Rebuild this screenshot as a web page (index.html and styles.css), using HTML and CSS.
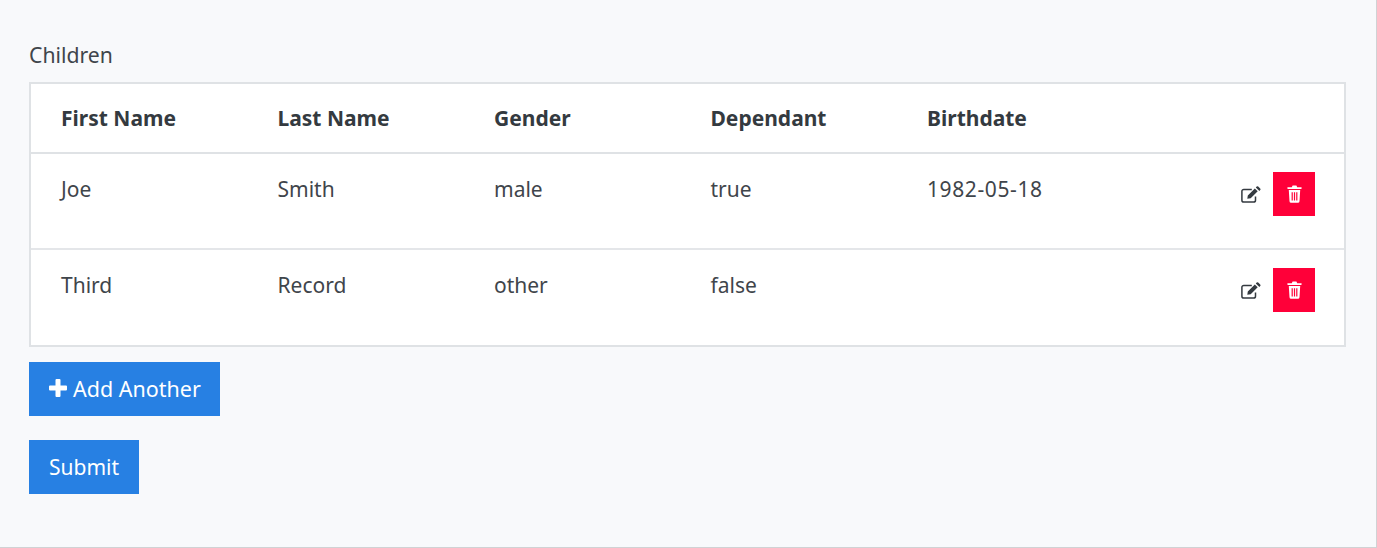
FILE: index.html
```html
<!DOCTYPE html>
<html lang="en">
<head>
  <meta charset="UTF-8">
  <meta name="viewport" content="width=device-width, initial-scale=1.0">
  <title>Children</title>
  <link rel="stylesheet" href="styles.css">
</head>
<body>

  <section class="page">
    <label class="field-label">Children</label>

    <table class="children">
      <thead>
        <tr>
          <th>First Name</th>
          <th>Last Name</th>
          <th>Gender</th>
          <th>Dependant</th>
          <th>Birthdate</th>
          <th></th>
        </tr>
      </thead>
      <tbody>
        <tr>
          <td>Joe</td>
          <td>Smith</td>
          <td>male</td>
          <td>true</td>
          <td class="date">1982-05-18</td>
          <td class="actions">
            <button class="edit" aria-label="Edit">
              <svg viewBox="0 0 20 17" width="20" height="17"><path d="M14.500 10.500v3.700a1.900 1.900 0 0 1-1.900 1.900H2.800a1.900 1.900 0 0 1-1.900-1.900V5.300a1.900 1.900 0 0 1 1.900-1.900h8" fill="none" stroke="#343a40" stroke-width="1.500"/><path d="M6.800 9.400 13.800 2.400l2.900 2.900-7 7-3.400.5zM14.800 1.400l.9-.8a1.100 1.100 0 0 1 1.500 0l2 2a1.100 1.100 0 0 1 0 1.500l-.8.9z" fill="#343a40"/></svg>
            </button>
            <button class="delete" aria-label="Delete">
              <svg viewBox="0 0 15 18" width="15" height="18"><path d="M1 2.300h3.800L5.600.6h3.800l.8 1.700H14a.8.800 0 0 1 0 1.600H1a.8.800 0 0 1 0-1.600zM1.800 5.100h11.400l-.7 11.200a1.600 1.600 0 0 1-1.600 1.500H4.100a1.600 1.600 0 0 1-1.600-1.500zM4.600 7.200v8.400h1.200V7.200zm2.300 0v8.400h1.200V7.200zm2.300 0v8.400h1.200V7.200z" fill="#fff" fill-rule="evenodd"/></svg>
            </button>
          </td>
        </tr>
        <tr>
          <td>Third</td>
          <td>Record</td>
          <td>other</td>
          <td>false</td>
          <td></td>
          <td class="actions">
            <button class="edit" aria-label="Edit">
              <svg viewBox="0 0 20 17" width="20" height="17"><path d="M14.500 10.500v3.700a1.900 1.900 0 0 1-1.900 1.900H2.800a1.900 1.900 0 0 1-1.900-1.900V5.300a1.900 1.900 0 0 1 1.900-1.900h8" fill="none" stroke="#343a40" stroke-width="1.500"/><path d="M6.800 9.400 13.800 2.400l2.900 2.900-7 7-3.400.5zM14.800 1.400l.9-.8a1.100 1.100 0 0 1 1.500 0l2 2a1.100 1.100 0 0 1 0 1.500l-.8.9z" fill="#343a40"/></svg>
            </button>
            <button class="delete" aria-label="Delete">
              <svg viewBox="0 0 15 18" width="15" height="18"><path d="M1 2.300h3.800L5.600.6h3.800l.8 1.700H14a.8.800 0 0 1 0 1.600H1a.8.800 0 0 1 0-1.600zM1.800 5.100h11.400l-.7 11.200a1.600 1.600 0 0 1-1.600 1.500H4.100a1.600 1.600 0 0 1-1.600-1.500zM4.600 7.200v8.400h1.200V7.200zm2.300 0v8.400h1.200V7.200zm2.300 0v8.400h1.200V7.200z" fill="#fff" fill-rule="evenodd"/></svg>
            </button>
          </td>
        </tr>
      </tbody>
    </table>

    <button class="primary add">
      <svg viewBox="0 0 18 18" width="18" height="18"><path d="M7.500 0h3a1 1 0 0 1 1 1v5.500H17a1 1 0 0 1 1 1v3a1 1 0 0 1-1 1h-5.500V17a1 1 0 0 1-1 1h-3a1 1 0 0 1-1-1v-5.500H1a1 1 0 0 1-1-1v-3a1 1 0 0 1 1-1h5.500V1a1 1 0 0 1 1-1z" fill="#fff"/></svg>
      Add Another
    </button>
    <button class="primary submit">Submit</button>
  </section>

</body>
</html>
```

FILE: styles.css
```css
* {
  box-sizing: border-box;
}

body {
  margin: 0;
  font-family: "Noto Sans", "Open Sans", sans-serif;
  color: #3f454b;
  background-color: #f8f9fb;
}

.page {
  height: 548px;
  padding: 40px 30px 0 29px;
  border-right: 1px solid #d0d2d4;
  border-bottom: 1px solid #d0d2d4;
}

.field-label {
  display: block;
  height: 42px;
  padding-top: 1px;
  font-size: 21.2px;
  line-height: 28px;
}

.children {
  width: 1317px;
  table-layout: fixed;
  border-collapse: separate;
  border-spacing: 0;
  border: 2px solid #dfe2e5;
  background-color: #fff;
  font-size: 21px;
}

.children th,
.children td {
  width: 216.5px;
  padding: 0 0 0 30px;
  text-align: left;
  vertical-align: top;
}

.children th:last-child,
.children td:last-child {
  width: auto;
}

.children th {
  height: 70px;
  padding-top: 19px;
  line-height: 30px;
  font-weight: 700;
  color: #343a40;
  border-bottom: 2px solid #dfe2e5;
}

.children td {
  height: 96px;
  padding-top: 21px;
  line-height: 28px;
  border-bottom: 2px solid #e4e6e9;
}

.children tr:last-child td {
  height: 95px;
  border-bottom: 0;
}

.children td.date {
  letter-spacing: 0.6px;
}

.children td.actions {
  padding: 18px 29px 0 0;
  text-align: right;
}

.actions button {
  display: inline-flex;
  align-items: center;
  justify-content: center;
  height: 44px;
  padding: 0;
  border: 0;
  vertical-align: top;
}

.edit {
  width: 21px;
  margin-right: 6px;
  padding-bottom: 1px;
  background: none;
}

.delete {
  width: 42px;
  background-color: #ff0039;
}

.primary {
  display: flex;
  align-items: center;
  height: 54px;
  padding: 0 19px 2px 20px;
  border: 0;
  color: #fff;
  background-color: #2780e3;
  font-family: inherit;
  font-size: 21.5px;
}

.primary svg {
  margin-right: 6px;
}

.add {
  margin-top: 15px;
  width: 191px;
}

.submit {
  margin-top: 24px;
  width: 110px;
  padding-bottom: 0;
  font-size: 21px;
}
```
